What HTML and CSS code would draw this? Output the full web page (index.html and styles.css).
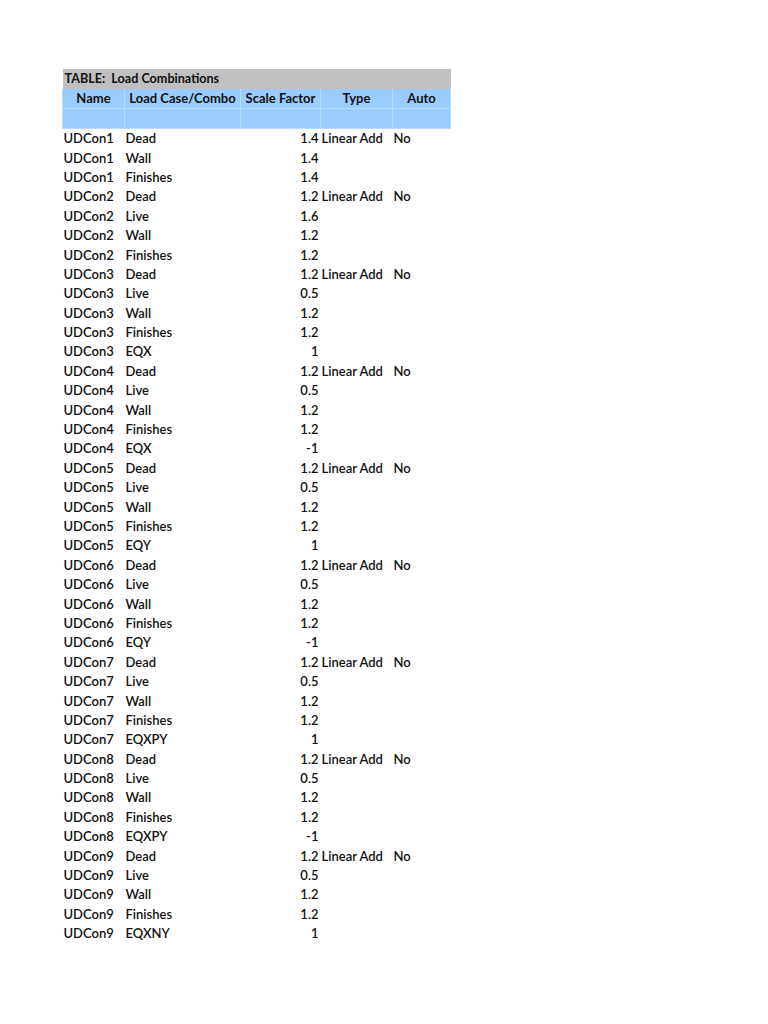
FILE: index.html
```html
<!DOCTYPE html>
<html>
<head>
<meta charset="utf-8">
<link rel="stylesheet" href="styles.css">
</head>
<body>
<div class="page">
<table class="sheet">
<colgroup>
<col class="c-name"><col class="c-case"><col class="c-scale"><col class="c-type"><col class="c-auto">
</colgroup>
<thead>
<tr class="title"><td colspan="5">TABLE:&nbsp; Load Combinations</td></tr>
<tr class="head"><th>Name</th><th>Load Case/Combo</th><th>Scale Factor</th><th>Type</th><th>Auto</th></tr>
<tr class="head blank"><th></th><th></th><th></th><th></th><th></th></tr>
</thead>
<tbody>
<tr><td>UDCon1</td><td>Dead</td><td class="num">1.4</td><td>Linear Add</td><td>No</td></tr>
<tr><td>UDCon1</td><td>Wall</td><td class="num">1.4</td><td></td><td></td></tr>
<tr><td>UDCon1</td><td>Finishes</td><td class="num">1.4</td><td></td><td></td></tr>
<tr><td>UDCon2</td><td>Dead</td><td class="num">1.2</td><td>Linear Add</td><td>No</td></tr>
<tr><td>UDCon2</td><td>Live</td><td class="num">1.6</td><td></td><td></td></tr>
<tr><td>UDCon2</td><td>Wall</td><td class="num">1.2</td><td></td><td></td></tr>
<tr><td>UDCon2</td><td>Finishes</td><td class="num">1.2</td><td></td><td></td></tr>
<tr><td>UDCon3</td><td>Dead</td><td class="num">1.2</td><td>Linear Add</td><td>No</td></tr>
<tr><td>UDCon3</td><td>Live</td><td class="num">0.5</td><td></td><td></td></tr>
<tr><td>UDCon3</td><td>Wall</td><td class="num">1.2</td><td></td><td></td></tr>
<tr><td>UDCon3</td><td>Finishes</td><td class="num">1.2</td><td></td><td></td></tr>
<tr><td>UDCon3</td><td>EQX</td><td class="num">1</td><td></td><td></td></tr>
<tr><td>UDCon4</td><td>Dead</td><td class="num">1.2</td><td>Linear Add</td><td>No</td></tr>
<tr><td>UDCon4</td><td>Live</td><td class="num">0.5</td><td></td><td></td></tr>
<tr><td>UDCon4</td><td>Wall</td><td class="num">1.2</td><td></td><td></td></tr>
<tr><td>UDCon4</td><td>Finishes</td><td class="num">1.2</td><td></td><td></td></tr>
<tr><td>UDCon4</td><td>EQX</td><td class="num">-1</td><td></td><td></td></tr>
<tr><td>UDCon5</td><td>Dead</td><td class="num">1.2</td><td>Linear Add</td><td>No</td></tr>
<tr><td>UDCon5</td><td>Live</td><td class="num">0.5</td><td></td><td></td></tr>
<tr><td>UDCon5</td><td>Wall</td><td class="num">1.2</td><td></td><td></td></tr>
<tr><td>UDCon5</td><td>Finishes</td><td class="num">1.2</td><td></td><td></td></tr>
<tr><td>UDCon5</td><td>EQY</td><td class="num">1</td><td></td><td></td></tr>
<tr><td>UDCon6</td><td>Dead</td><td class="num">1.2</td><td>Linear Add</td><td>No</td></tr>
<tr><td>UDCon6</td><td>Live</td><td class="num">0.5</td><td></td><td></td></tr>
<tr><td>UDCon6</td><td>Wall</td><td class="num">1.2</td><td></td><td></td></tr>
<tr><td>UDCon6</td><td>Finishes</td><td class="num">1.2</td><td></td><td></td></tr>
<tr><td>UDCon6</td><td>EQY</td><td class="num">-1</td><td></td><td></td></tr>
<tr><td>UDCon7</td><td>Dead</td><td class="num">1.2</td><td>Linear Add</td><td>No</td></tr>
<tr><td>UDCon7</td><td>Live</td><td class="num">0.5</td><td></td><td></td></tr>
<tr><td>UDCon7</td><td>Wall</td><td class="num">1.2</td><td></td><td></td></tr>
<tr><td>UDCon7</td><td>Finishes</td><td class="num">1.2</td><td></td><td></td></tr>
<tr><td>UDCon7</td><td>EQXPY</td><td class="num">1</td><td></td><td></td></tr>
<tr><td>UDCon8</td><td>Dead</td><td class="num">1.2</td><td>Linear Add</td><td>No</td></tr>
<tr><td>UDCon8</td><td>Live</td><td class="num">0.5</td><td></td><td></td></tr>
<tr><td>UDCon8</td><td>Wall</td><td class="num">1.2</td><td></td><td></td></tr>
<tr><td>UDCon8</td><td>Finishes</td><td class="num">1.2</td><td></td><td></td></tr>
<tr><td>UDCon8</td><td>EQXPY</td><td class="num">-1</td><td></td><td></td></tr>
<tr><td>UDCon9</td><td>Dead</td><td class="num">1.2</td><td>Linear Add</td><td>No</td></tr>
<tr><td>UDCon9</td><td>Live</td><td class="num">0.5</td><td></td><td></td></tr>
<tr><td>UDCon9</td><td>Wall</td><td class="num">1.2</td><td></td><td></td></tr>
<tr><td>UDCon9</td><td>Finishes</td><td class="num">1.2</td><td></td><td></td></tr>
<tr><td>UDCon9</td><td>EQXNY</td><td class="num">1</td><td></td><td></td></tr>
</tbody>
</table>
</div>
</body>
</html>
```

FILE: styles.css
```css
html, body {
  margin: 0;
  padding: 0;
  background: #ffffff;
}
.page {
  padding: 69px 0 0 62px;
}
.sheet {
  border-collapse: collapse;
  table-layout: fixed;
  width: 388px;
  font-family: Lato, "Liberation Sans", sans-serif;
  font-size: 13px;
  color: #111111;
}
.c-name { width: 62px; }
.c-case { width: 116px; }
.c-scale { width: 80px; }
.c-type { width: 72px; }
.c-auto { width: 58px; }
.sheet td, .sheet th {
  padding: 0 0 0 1px;
  height: 19.4px;
  line-height: 19px;
  white-space: nowrap;
  overflow: visible;
  text-align: left;
  font-weight: 600;
}
.title td {
  background: #c0c0c0;
  font-weight: 700;
  height: 20px;
  line-height: 20px;
  padding-left: 2px;
  font-size: 12.6px;
}
.head th {
  background: #99ccff;
  font-weight: 700;
  text-align: center;
  border-left: 1px solid #b9dbfd;
  border-right: 1px solid #b9dbfd;
  border-bottom: 1px solid #b9dbfd;
  height: 19px;
  padding: 0;
}
.head.blank th {
  height: 19px;
}
.sheet td.num {
  text-align: right;
  padding: 0 2px 0 0;
}
```
